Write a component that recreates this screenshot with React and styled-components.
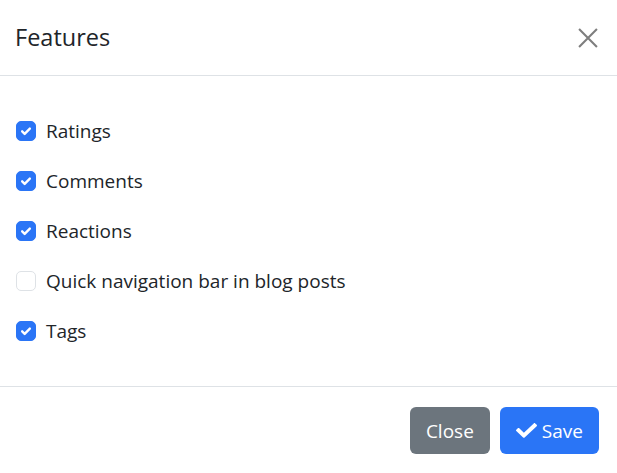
import React, { useState } from "react";
import styled, { createGlobalStyle } from "styled-components";

const GlobalStyle = createGlobalStyle`
  html, body {
    margin: 0;
    padding: 0;
    background: #fff;
  }
  body {
    font-family: "Open Sans", "Noto Sans", "Liberation Sans", sans-serif;
    color: #212529;
  }
`;

const Modal = styled.div`
  width: 617px;
  height: 473px;
  display: flex;
  flex-direction: column;
  background: #fff;
`;

const Header = styled.div`
  height: 75px;
  display: flex;
  align-items: center;
  justify-content: space-between;
  padding: 0 17px 0 15px;
  border-bottom: 1px solid #dee2e6;
`;

const Title = styled.h5`
  margin: 0;
  font-size: 23.5px;
  font-weight: 500;
  line-height: 1.2;
  color: #212529;
`;

const CloseX = styled.button`
  width: 24px;
  height: 24px;
  padding: 0;
  border: 0;
  background: transparent;
  display: flex;
  align-items: center;
  justify-content: center;
  cursor: pointer;
  opacity: 0.5;
`;

const Body = styled.div`
  flex: 1;
  padding: 30px 16px 29px;
  display: flex;
  flex-direction: column;
`;

const Row = styled.label`
  height: 50px;
  display: flex;
  align-items: center;
  gap: 10px;
  font-size: 19px;
  color: #212529;
  cursor: pointer;
`;

const Box = styled.span`
  width: 20px;
  height: 20px;
  box-sizing: border-box;
  border-radius: 5px;
  border: 1px solid ${(p) => (p.$on ? "#2a75f6" : "#dee2e6")};
  background: ${(p) => (p.$on ? "#2a75f6" : "#fff")};
  display: flex;
  align-items: center;
  justify-content: center;
  flex-shrink: 0;
`;

const Footer = styled.div`
  border-top: 1px solid #dee2e6;
  padding: 20px 18px 19px;
  display: flex;
  justify-content: flex-end;
  gap: 10px;
`;

const Btn = styled.button`
  height: 47px;
  padding: 0 16px;
  border: 0;
  border-radius: 6px;
  display: flex;
  align-items: center;
  justify-content: center;
  gap: 5px;
  min-width: ${(p) => (p.$primary ? "99px" : "80px")};
  font-family: inherit;
  font-size: 19px;
  color: #fff;
  background: ${(p) => (p.$primary ? "#2a75f6" : "#6c757d")};
  cursor: pointer;
`;

const Tick = () => (
  <svg width="14" height="14" viewBox="0 0 20 20">
    <path
      d="M4.5 10.5l3.6 3.6L15.5 6.5"
      fill="none"
      stroke="#fff"
      strokeWidth="3.4"
      strokeLinecap="round"
      strokeLinejoin="round"
    />
  </svg>
);

const BigCheck = () => (
  <svg width="21" height="15" viewBox="0 12 512 390" preserveAspectRatio="none">
    <path
      fill="#fff"
      d="M173.9 389.4L7.5 223c-10-10-10-26.2 0-36.2l36.2-36.2c10-10 26.2-10 36.2 0L192 262.7 432.1 22.6c10-10 26.2-10 36.2 0l36.2 36.2c10 10 10 26.2 0 36.2L210.1 389.4c-10 10-26.2 10-36.2 0z"
    />
  </svg>
);

const features = [
  { label: "Ratings", on: true },
  { label: "Comments", on: true },
  { label: "Reactions", on: true },
  { label: "Quick navigation bar in blog posts", on: false },
  { label: "Tags", on: true },
];

export default function App() {
  const [items, setItems] = useState(features);
  const toggle = (i) =>
    setItems(items.map((it, j) => (j === i ? { ...it, on: !it.on } : it)));

  return (
    <>
      <GlobalStyle />
      <Modal>
        <Header>
          <Title>Features</Title>
          <CloseX aria-label="Close">
            <svg width="22" height="22" viewBox="0 0 16 16">
              <path
                d="M1.5 1.5l13 13M14.5 1.5l-13 13"
                stroke="#000"
                strokeWidth="1.5"
                fill="none"
              />
            </svg>
          </CloseX>
        </Header>
        <Body>
          {items.map((it, i) => (
            <Row key={it.label} onClick={() => toggle(i)}>
              <Box $on={it.on}>{it.on && <Tick />}</Box>
              {it.label}
            </Row>
          ))}
        </Body>
        <Footer>
          <Btn>Close</Btn>
          <Btn $primary>
            <BigCheck />
            Save
          </Btn>
        </Footer>
      </Modal>
    </>
  );
}
